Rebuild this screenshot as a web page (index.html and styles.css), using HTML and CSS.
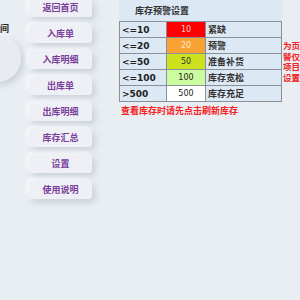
FILE: index.html
```html
<!DOCTYPE html>
<html lang="zh">
<head>
<meta charset="utf-8">
<link rel="stylesheet" href="styles.css">
</head>
<body>
<div class="page">
  <div class="side">
    <div class="side-label">间</div>
    <div class="side-dial"></div>
  </div>
  <nav class="nav">
    <div class="btn">返回首页</div>
    <div class="btn">入库单</div>
    <div class="btn">入库明细</div>
    <div class="btn">出库单</div>
    <div class="btn">出库明细</div>
    <div class="btn">库存汇总</div>
    <div class="btn">设置</div>
    <div class="btn">使用说明</div>
  </nav>
  <div class="main">
    <div class="panel">
      <div class="panel-title">库存预警设置</div>
      <table class="warn">
        <tr><td class="c1">&lt;=10</td><td class="c2 red">10</td><td class="c3">紧缺</td></tr>
        <tr><td class="c1">&lt;=20</td><td class="c2 orange">20</td><td class="c3">预警</td></tr>
        <tr><td class="c1">&lt;=50</td><td class="c2 yellow">50</td><td class="c3">准备补货</td></tr>
        <tr><td class="c1">&lt;=100</td><td class="c2 green">100</td><td class="c3">库存宽松</td></tr>
        <tr><td class="c1">&gt;500</td><td class="c2 white">500</td><td class="c3">库存充足</td></tr>
      </table>
    </div>
    <div class="hint">查看库存时请先点击刷新库存</div>
  </div>
  <div class="note">为页警仅项目设置</div>
</div>
</body>
</html>
```
FILE: styles.css
```css
html, body {
  margin: 0;
  padding: 0;
  background: #e9eef3;
  width: 300px;
  height: 300px;
  overflow: hidden;
  font-family: "Noto Sans CJK SC", "Liberation Sans", sans-serif;
}
.page {
  display: flex;
  align-items: flex-start;
}
.side {
  width: 29px;
  flex: none;
  padding-top: 23px;
}
.side-label {
  font-size: 9px;
  font-weight: bold;
  color: #222;
  line-height: 12px;
  height: 12px;
}
.side-dial {
  width: 47px;
  height: 47px;
  border-radius: 50%;
  margin-left: -26px;
  background: #e8ecf1;
  box-shadow: 3px 3px 6px rgba(160, 170, 185, 0.45), -2px -2px 4px rgba(255, 255, 255, 0.9);
}
.nav {
  width: 63px;
  flex: none;
  display: flex;
  flex-direction: column;
  gap: 8px;
  margin-top: -1px;
}
.btn {
  height: 18px;
  line-height: 18px;
  border-radius: 3px;
  background: #eef0f5;
  text-align: center;
  font-size: 9px;
  font-weight: bold;
  color: #7a3f9c;
  box-shadow: 3px 3px 6px rgba(165, 175, 190, 0.5), -2px -2px 5px rgba(255, 255, 255, 0.95);
}
.main {
  margin-left: 27px;
  width: 163px;
  flex: none;
}
.panel {
  background: #dce8f4;
}
.panel-title {
  height: 21px;
  line-height: 21px;
  padding-left: 16px;
  font-size: 9px;
  font-weight: bold;
  color: #333;
}
.warn {
  width: 163px;
  border-collapse: collapse;
  border: 1px solid #7d848c;
  font-size: 9px;
}
.warn td {
  border: 1px solid #8a9098;
  height: 15px;
  padding: 0;
  line-height: 14px;
}
.c1 {
  width: 44px;
  padding-left: 2px !important;
  font-weight: bold;
  color: #222;
  font-family: "DejaVu Sans", sans-serif;
  font-size: 9px;
}
.c2 {
  width: 38px;
  text-align: center;
  font-size: 8px;
  font-family: "DejaVu Sans", sans-serif;
  color: #222;
}
.c3 {
  padding-left: 2px !important;
  font-weight: bold;
  color: #333;
}
.red { background: #fe0000; color: #ffd0d0; }
.orange { background: #f9a233; color: #ffe8cc; }
.yellow { background: #cbe21d; color: #333; }
.green { background: #ccfca0; color: #222; }
.white { background: #ffffff; color: #222; }
.hint {
  margin-top: 2px;
  padding-left: 2px;
  font-size: 9px;
  line-height: 13px;
  font-weight: bold;
  color: #f52020;
}
.note {
  width: 18px;
  margin-left: 1px;
  margin-top: 40px;
  font-size: 8.5px;
  line-height: 10.5px;
  font-weight: bold;
  color: #f52020;
  word-break: break-all;
}
```
